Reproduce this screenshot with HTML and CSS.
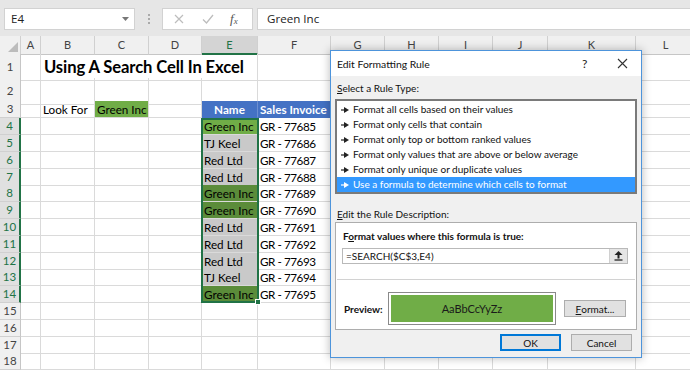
FILE: index.html
```html
<!DOCTYPE html>
<html>
<head>
<meta charset="utf-8">
<link rel="stylesheet" href="styles.css">
</head>
<body>
<div class="fbar">
  <div class="namebox"><span>E4</span><svg class="dd" width="7" height="4" viewBox="0 0 7 4"><path d="M0 0h7L3.5 4z" fill="#777"/></svg></div>
  <div class="dots"><i></i><i></i><i></i></div>
  <div class="fxbox">
    <svg width="10" height="10" viewBox="0 0 10 10"><path d="M1 1l8 8M9 1l-8 8" stroke="#bdbdbd" stroke-width="1.2"/></svg>
    <svg width="12" height="10" viewBox="0 0 12 10"><path d="M1 5.5l3.5 3.5L11 1" stroke="#bdbdbd" stroke-width="1.3" fill="none"/></svg>
    <span class="fx">f<sub>x</sub></span>
  </div>
  <div class="formula">Green Inc</div>
</div>
<div class="sheet">
  <div class="row hd"><span class="corner"><svg width="10" height="10" viewBox="0 0 10 10"><path d="M10 0v10H0z" fill="#bcbcbc"/></svg></span><span>A</span><span>B</span><span>C</span><span>D</span><span class="csel">E</span><span>F</span><span>G</span><span>H</span><span>I</span><span>J</span><span>K</span><span>L</span></div>
  <div class="row r1"><span class="rh">1</span><span></span><span class="title">Using A Search Cell In Excel</span><span></span><span></span><span></span><span></span><span></span><span></span><span></span></div>
  <div class="row r2"><span class="rh">2</span><span></span><span></span><span></span><span></span><span></span><span></span><span></span><span></span><span></span><span></span><span></span><span></span></div>
  <div class="row"><span class="rh">3</span><span></span><span class="t">Look For</span><span class="t gc">Green Inc</span><span></span><span class="th">Name</span><span class="th thl">Sales Invoice</span><span></span><span></span><span></span><span></span><span></span><span></span></div>
  <div class="row"><span class="rh rs">4</span><span></span><span></span><span></span><span></span><span class="t ga">Green Inc</span><span class="t n">GR - 77685</span><span></span><span></span><span></span><span></span><span></span><span></span></div>
  <div class="row"><span class="rh rs">5</span><span></span><span></span><span></span><span></span><span class="t gs">TJ Keel</span><span class="t n">GR - 77686</span><span></span><span></span><span></span><span></span><span></span><span></span></div>
  <div class="row"><span class="rh rs">6</span><span></span><span></span><span></span><span></span><span class="t gs">Red Ltd</span><span class="t n">GR - 77687</span><span></span><span></span><span></span><span></span><span></span><span></span></div>
  <div class="row"><span class="rh rs">7</span><span></span><span></span><span></span><span></span><span class="t gs">Red Ltd</span><span class="t n">GR - 77688</span><span></span><span></span><span></span><span></span><span></span><span></span></div>
  <div class="row"><span class="rh rs">8</span><span></span><span></span><span></span><span></span><span class="t gd">Green Inc</span><span class="t n">GR - 77689</span><span></span><span></span><span></span><span></span><span></span><span></span></div>
  <div class="row"><span class="rh rs">9</span><span></span><span></span><span></span><span></span><span class="t gd">Green Inc</span><span class="t n">GR - 77690</span><span></span><span></span><span></span><span></span><span></span><span></span></div>
  <div class="row"><span class="rh rs">10</span><span></span><span></span><span></span><span></span><span class="t gs">Red Ltd</span><span class="t n">GR - 77691</span><span></span><span></span><span></span><span></span><span></span><span></span></div>
  <div class="row"><span class="rh rs">11</span><span></span><span></span><span></span><span></span><span class="t gs">Red Ltd</span><span class="t n">GR - 77692</span><span></span><span></span><span></span><span></span><span></span><span></span></div>
  <div class="row"><span class="rh rs">12</span><span></span><span></span><span></span><span></span><span class="t gs">Red Ltd</span><span class="t n">GR - 77693</span><span></span><span></span><span></span><span></span><span></span><span></span></div>
  <div class="row"><span class="rh rs">13</span><span></span><span></span><span></span><span></span><span class="t gs">TJ Keel</span><span class="t n">GR - 77694</span><span></span><span></span><span></span><span></span><span></span><span></span></div>
  <div class="row"><span class="rh rs">14</span><span></span><span></span><span></span><span></span><span class="t gd">Green Inc</span><span class="t n">GR - 77695</span><span></span><span></span><span></span><span></span><span></span><span></span></div>
  <div class="row"><span class="rh">15</span><span></span><span></span><span></span><span></span><span></span><span></span><span></span><span></span><span></span><span></span><span></span><span></span></div>
  <div class="row"><span class="rh">16</span><span></span><span></span><span></span><span></span><span></span><span></span><span></span><span></span><span></span><span></span><span></span><span></span></div>
  <div class="row"><span class="rh">17</span><span></span><span></span><span></span><span></span><span></span><span></span><span></span><span></span><span></span><span></span><span></span><span></span></div>
  <div class="row"><span class="rh">18</span><span></span><span></span><span></span><span></span><span></span><span></span><span></span><span></span><span></span><span></span><span></span><span></span></div>
  <div class="selbox"><i class="handle"></i></div>
</div>

<div class="dlg">
  <div class="dtitle"><span class="dt">Edit Formatting Rule</span><span class="q">?</span><svg class="close" width="11" height="11" viewBox="0 0 11 11"><path d="M1 1l9 9M10 1l-9 9" stroke="#333" stroke-width="1.1"/></svg></div>
  <div class="dbody">
    <div class="lbl"><u>S</u>elect a Rule Type:</div>
    <ul class="list">
      <li><svg class="ar" width="8" height="6" viewBox="0 0 8 6"><path d="M0 3h4" stroke="#222" stroke-width="1.2"/><path d="M3 0l5 3-5 3z" fill="#222"/></svg>Format all cells based on their values</li>
      <li><svg class="ar" width="8" height="6" viewBox="0 0 8 6"><path d="M0 3h4" stroke="#222" stroke-width="1.2"/><path d="M3 0l5 3-5 3z" fill="#222"/></svg>Format only cells that contain</li>
      <li><svg class="ar" width="8" height="6" viewBox="0 0 8 6"><path d="M0 3h4" stroke="#222" stroke-width="1.2"/><path d="M3 0l5 3-5 3z" fill="#222"/></svg>Format only top or bottom ranked values</li>
      <li><svg class="ar" width="8" height="6" viewBox="0 0 8 6"><path d="M0 3h4" stroke="#222" stroke-width="1.2"/><path d="M3 0l5 3-5 3z" fill="#222"/></svg>Format only values that are above or below average</li>
      <li><svg class="ar" width="8" height="6" viewBox="0 0 8 6"><path d="M0 3h4" stroke="#222" stroke-width="1.2"/><path d="M3 0l5 3-5 3z" fill="#222"/></svg>Format only unique or duplicate values</li>
      <li class="on"><svg class="ar" width="8" height="6" viewBox="0 0 8 6"><path d="M0 3h4" stroke="#fff" stroke-width="1.2"/><path d="M3 0l5 3-5 3z" fill="#fff"/></svg>Use a formula to determine which cells to format</li>
    </ul>
    <div class="lbl lbl2"><u>E</u>dit the Rule Description:</div>
    <div class="desc">
      <div class="bl">F<u>o</u>rmat values where this formula is true:</div>
      <div class="finput"><span class="ftxt">=SEARCH($C$3,E4)</span><span class="ref"><svg width="9" height="10" viewBox="0 0 9 10"><path d="M4.5 0L8.5 4H5.5V7.5H3.5V4H0.5z" fill="#222"/><path d="M0.5 9h8" stroke="#222" stroke-width="1.3"/></svg></span></div>
      <div class="sep"></div>
      <div class="prev">
        <span class="bl plbl">Preview:</span>
        <div class="pbox"><div class="pin">AaBbCcYyZz</div></div>
        <div class="btn fmt"><u>F</u>ormat...</div>
      </div>
    </div>
    <div class="btns"><div class="btn ok">OK</div><div class="btn">Cancel</div></div>
  </div>
</div>
</body>
</html>
```
FILE: styles.css
```css
*{box-sizing:border-box;margin:0;padding:0}
body{width:690px;height:374px;overflow:hidden;background:#fff;position:relative;font-family:Lato,"Liberation Sans",sans-serif;color:#000}

/* formula bar */
.fbar{height:36px;background:#e6e6e6;display:flex;align-items:center;padding-left:4px;padding-top:1px}
.namebox{width:131px;height:22px;background:#fff;border:1px solid #d2d2d2;display:flex;align-items:center;justify-content:space-between;padding:0 5px 0 6px;font-family:"Open Sans","Noto Sans",sans-serif;font-size:11.5px;color:#222}
.dots{width:27px;display:flex;flex-direction:column;align-items:center;gap:2px}
.dots i{width:2px;height:2px;background:#aaa}
.fxbox{width:91px;height:22px;background:#fff;border:1px solid #d2d2d2;display:flex;align-items:center;padding-left:11px;gap:18px}
.fx{font-family:"Liberation Serif",serif;font-style:italic;font-size:13px;color:#555;margin-left:-2px}
.fx sub{font-size:9px;vertical-align:-1px}
.formula{flex:1;height:22px;margin-left:4px;background:#fff;border:1px solid #d2d2d2;border-right:none;display:flex;align-items:center;padding-left:9px;font-family:"Open Sans","Noto Sans",sans-serif;font-size:11.6px;color:#222}

/* sheet */
.sheet{position:relative}
.row{display:grid;grid-template-columns:21px 20px 54px 54px 53px 56px 73px 54px 54px 54px 55px 88px 60px;height:16.8px}
.row>span{border-right:1px solid #dadada;border-bottom:1px solid #dadada;white-space:nowrap;font-size:11.7px;line-height:16px;overflow:visible}
.row.hd{height:17.5px;background:#f0f0f0}
.row.hd>span{border-right:1px solid #d0d0d0;border-bottom:1px solid #c6c6c6;text-align:center;font-size:11px;color:#444;line-height:17px}
.row.hd .corner{display:flex;align-items:flex-end;justify-content:flex-end;padding:0 2px 2px 0}
.row.hd .csel{background:#d4d4d4;color:#217346;border-bottom:2px solid #217346}
.r1{height:24.7px}
.r2{height:23.3px}
.rh{background:#f0f0f0;text-align:center;color:#444;border-right-color:#c6c6c6!important;border-bottom-color:#d0d0d0!important;font-size:11.5px!important}
.r1 .rh,.r2 .rh{line-height:26px}
.rh.rs{background:#e0e0e0;color:#217346;border-right:2px solid #217346!important}
.title{grid-column:span 4;font-weight:700;font-size:16.6px!important;line-height:26px!important;padding-left:3px;letter-spacing:-0.1px}
.t{padding-left:2px}
.n{letter-spacing:-0.45px}
.gc{background:#70ad47}
.th{background:#4472c4;color:#fff;font-weight:700;text-align:center;border-right-color:#6d8fd0!important;border-bottom-color:#4472c4!important}
.thl{text-align:left;padding-left:2px}
.ga{background:#70ad47}
.gs{background:#c9c9c9}
.gd{background:#5b8c3a}
.selbox{position:absolute;left:201px;top:82px;width:58px;height:185px;border:2px solid #217346;pointer-events:none}
.handle{position:absolute;right:-4px;bottom:-4px;width:6px;height:6px;background:#217346;border:1px solid #fff}

/* dialog */
.dlg{position:absolute;left:330px;top:50px;width:312px;border:1px solid #4d94db;background:#f0f0f0;box-shadow:0 0 9px rgba(0,0,0,.28);font-family:Lato,"Open Sans",sans-serif;font-size:10px;color:#111}
.dtitle{height:25px;background:#fff;display:flex;align-items:center;padding-left:6px;position:relative}
.dt{font-size:10.4px;color:#111}
.q{position:absolute;left:251px;top:5px;font-size:12px;color:#222}
.close{position:absolute;left:286px;top:7px}
.dbody{padding:0 4px 6px 4px;display:flex;flex-direction:column}
.lbl{height:14px;margin-top:5px;line-height:14px;padding-left:2px}
.lbl2{margin-top:13px}
.list{list-style:none;margin-top:4px;height:95px;width:302px;border:2px solid #7a7a7a;background:#fff;padding-top:1px}
.list li{height:15px;line-height:15px;display:flex;align-items:center;padding-left:4px;gap:4px;white-space:nowrap}
.list li.on{background:#3399ff;color:#fff}
.desc{margin-top:1px;height:108px;width:302px;border:1px solid #adadad;background:#fff;display:flex;flex-direction:column;padding-left:6px}
.bl{font-weight:700}
.desc>.bl{margin-top:6px;height:14px;line-height:14px;padding-left:1px}
.finput{margin-top:5px;width:286px;height:16px;border:1px solid #b9b9b9;display:flex;align-items:center;justify-content:space-between}
.ftxt{padding-left:3px}
.ref{width:18px;height:14px;background:#e5e5e5;border-left:1px solid #d0d0d0;display:flex;align-items:center;justify-content:center}
.sep{margin:15px 0 0 -5px;width:298px;height:1px;background:#d2d2d2}
.prev{margin-top:12px;height:33px;display:flex;align-items:center}
.plbl{width:46px;padding-left:2px}
.pbox{width:168px;height:33px;border:1px solid #8a8a8a;padding:2px;background:#fff}
.pin{height:100%;background:#70ad47;display:flex;align-items:center;justify-content:center;font-size:11px;color:#1a1a1a}
.btn{height:17px;width:62px;background:#e1e1e1;border:1px solid #adadad;display:flex;align-items:center;justify-content:center}
.fmt{margin-left:8px}
.btns{margin-top:4px;display:flex;justify-content:flex-end;gap:10px;padding-right:5px}
.btns .btn{width:61px}
.ok{border:1px solid #0078d7;box-shadow:inset 0 0 0 1px #0078d7}
```
